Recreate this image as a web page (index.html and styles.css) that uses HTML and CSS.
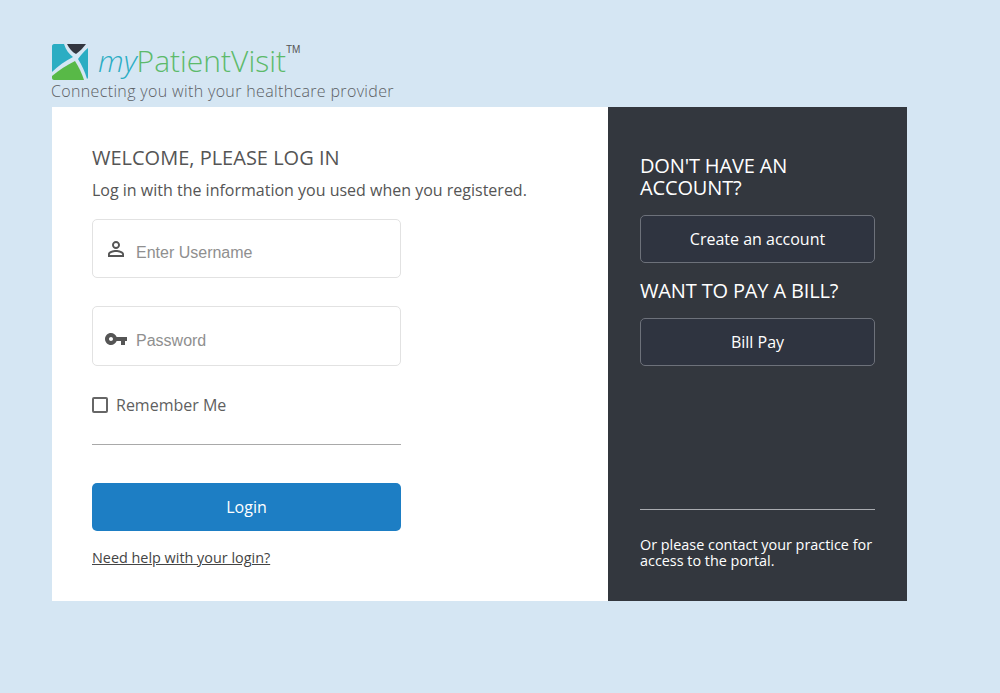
FILE: index.html
```html
<!DOCTYPE html>
<html lang="en">
<head>
<meta charset="utf-8">
<title>myPatientVisit</title>
<link rel="stylesheet" href="styles.css">
</head>
<body>
<div class="page">
  <header class="brand">
    <div class="brand-row">
      <svg class="logo" width="36" height="36" viewBox="0 0 36 36" aria-hidden="true">
        <path fill="#2badc3" d="M2 0H12C14 6 17 10 21 13C13 17 6 22 0 28V2C0 1 1 0 2 0Z"/>
        <path fill="#33363f" d="M15 0H34C31 4 28 7 24 10C20 8 17 4 15 0Z"/>
        <path fill="#2badc3" d="M36 4V33C36 34 35.800 34.500 35 35C33 28 30 21 26 15C29 11 32 7 36 4Z"/>
        <path fill="#58b947" d="M23 17C27 23 30 30 32 36H2C1 36 0 35 0 34V32C7 26 15 21 23 17Z"/>
      </svg>
      <div class="wordmark"><em>my</em>PatientVisit<sup>TM</sup></div>
    </div>
    <p class="tagline">Connecting you with your healthcare provider</p>
  </header>
  <main class="card">
    <section class="login">
      <h1>WELCOME, PLEASE LOG IN</h1>
      <p class="intro">Log in with the information you used when you registered.</p>
      <label class="field">
        <svg width="24" height="24" viewBox="0 0 24 24" aria-hidden="true"><path fill="#555" d="M12 5.900a2.100 2.100 0 1 1 0 4.200 2.100 2.100 0 0 1 0-4.200m0 9c2.970 0 6.100 1.460 6.100 2.100v1.100H5.900V17c0-.64 3.130-2.100 6.100-2.100M12 4C9.790 4 8 5.790 8 8s1.790 4 4 4 4-1.790 4-4-1.790-4-4-4zm0 9c-2.670 0-8 1.340-8 4v3h16v-3c0-2.660-5.330-4-8-4z"/></svg>
        <input type="text" placeholder="Enter Username">
      </label>
      <label class="field field-pass">
        <svg width="24" height="24" viewBox="0 0 24 24" aria-hidden="true"><path fill="#555" d="M12.650 10C11.830 7.670 9.610 6 7 6c-3.310 0-6 2.690-6 6s2.690 6 6 6c2.610 0 4.830-1.670 5.650-4H17v4h4v-4h2v-4H12.650zM7 14c-1.100 0-2-.9-2-2s.9-2 2-2 2 .9 2 2-.9 2-2 2z"/></svg>
        <input type="password" placeholder="Password">
      </label>
      <label class="remember"><span class="box"></span>Remember Me</label>
      <div class="rule"></div>
      <button class="btn-login" type="button">Login</button>
      <a class="help" href="#">Need help with your login?</a>
    </section>
    <aside class="side">
      <div>
        <h2>DON'T HAVE AN ACCOUNT?</h2>
        <a class="btn-side" href="#">Create an account</a>
        <h2 class="second">WANT TO PAY A BILL?</h2>
        <a class="btn-side" href="#">Bill Pay</a>
      </div>
      <p class="contact">Or please contact your practice for access to the portal.</p>
    </aside>
  </main>
</div>
</body>
</html>
```
FILE: styles.css
```css
* { box-sizing: border-box; }
html, body { margin: 0; height: 100%; }
body {
  background: #d5e6f3;
  font-family: "Open Sans", "Liberation Sans", sans-serif;
  color: #555;
  overflow: hidden;
}
.page { width: 855px; margin-left: 52px; padding-top: 44px; }
.brand { height: 63px; }
.brand-row { display: flex; align-items: flex-start; height: 36px; }
.logo { flex: none; display: block; }
.wordmark {
  margin-left: 10px;
  margin-top: -1px;
  font-size: 30px;
  font-weight: 300;
  line-height: 36px;
  color: #5cba6a;
  white-space: nowrap;
}
.wordmark em { color: #2badc3; font-style: italic; }
.wordmark sup {
  font-family: "Liberation Sans", sans-serif;
  font-size: 10px;
  font-weight: 400;
  color: #555;
  line-height: 0;
  position: relative;
  top: -8px;
  vertical-align: super;
}
.tagline {
  margin: 0 0 0 -1px;
  font-size: 16px;
  font-weight: 300;
  line-height: 22px;
  letter-spacing: .35px;
  color: #5c6064;
  white-space: nowrap;
}
.card { display: flex; height: 494px; background: #fff; }
.login { width: 556px; padding: 37px 40px 0; }
h1 {
  margin: 0;
  font-size: 20px;
  font-weight: 400;
  line-height: 27px;
  color: #555;
}
.intro { margin: 7px 0 0; font-size: 16px; line-height: 24px; color: #555; }
.field {
  display: flex;
  align-items: center;
  width: 309px;
  height: 59px;
  margin-top: 17px;
  padding-left: 11px;
  border: 1px solid #e2e2e2;
  border-radius: 5px;
  background: #fff;
}
.field-pass { height: 60px; margin-top: 28px; }
.field svg { flex: none; margin-top: 1px; }
.field-pass svg { margin-top: 5px; }
.field input {
  flex: 1;
  min-width: 0;
  margin-left: 8px;
  margin-top: 8px;
  border: 0;
  outline: 0;
  padding: 0;
  background: none;
  font-family: "Liberation Sans", sans-serif;
  font-size: 16px;
  color: #555;
}
.field-pass input { margin-top: 10px; }
.field input::placeholder { color: #8f8f8f; opacity: 1; }
.remember {
  display: flex;
  align-items: center;
  margin-top: 27px;
  height: 24px;
  font-size: 16px;
  color: #5f5f5f;
}
.box {
  width: 16px;
  height: 16px;
  margin-right: 8px;
  border: 2px solid #666;
  border-radius: 2px;
}
.rule { width: 309px; margin-top: 27px; border-top: 1px solid #a9a9a9; }
.btn-login {
  display: block;
  width: 309px;
  height: 48px;
  margin-top: 38px;
  border: 0;
  border-radius: 5px;
  background: #1d7ec4;
  color: #fff;
  font: 400 16px "Open Sans", sans-serif;
}
.help {
  display: inline-block;
  margin-top: 17px;
  font-size: 14.400px;
  line-height: 20px;
  color: #444;
  text-decoration: underline;
}
.side {
  width: 299px;
  padding: 48px 32px 32px;
  background: #33373e;
  color: #fff;
  display: flex;
  flex-direction: column;
  justify-content: space-between;
}
h2 {
  margin: 0;
  font-size: 20px;
  font-weight: 400;
  line-height: 22px;
  letter-spacing: -.15px;
  color: #fff;
}
.second { margin-top: 17px; }
.btn-side {
  display: flex;
  align-items: center;
  justify-content: center;
  width: 235px;
  height: 48px;
  margin-top: 16px;
  border: 1px solid #6d717a;
  border-radius: 5px;
  background: #2f3440;
  color: #fff;
  font-size: 16px;
  text-decoration: none;
}
.contact {
  margin: 0;
  padding-top: 27px;
  border-top: 1px solid #a9abb0;
  font-size: 14.400px;
  line-height: 16px;
  color: #fff;
}
```
